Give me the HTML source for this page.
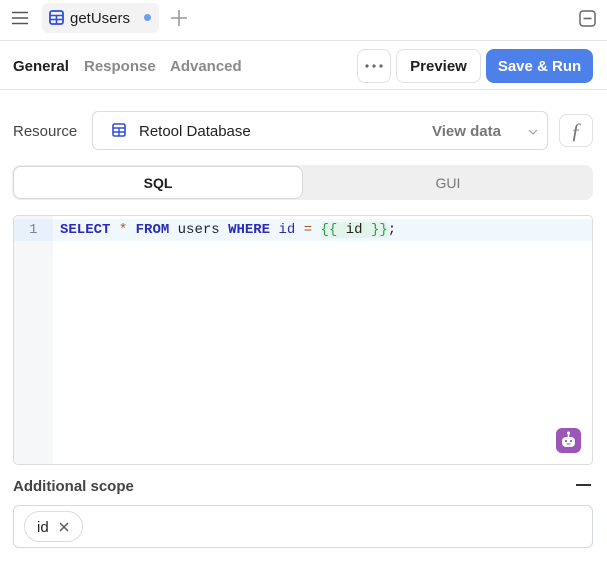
<!DOCTYPE html>
<html><head><style>
*{box-sizing:border-box;margin:0;padding:0}
body{width:607px;height:562px;background:#fff;font-family:"Liberation Sans",sans-serif;position:relative;overflow:hidden;color:#1f1f1f}
.a{position:absolute}
.btn{position:absolute;border:1px solid #e0e0e0;border-radius:8px;background:#fff;display:flex;align-items:center;justify-content:center;font-weight:bold;font-size:15px}
.mono{font-family:"Liberation Mono",monospace;font-size:14px}
</style></head><body>
<svg class="a" style="left:12px;top:11px" width="17" height="14"><path d="M0 1.5H16M0 7H16M0 12.5H16" stroke="#555" stroke-width="1.6"/></svg>
<div class="a" style="left:42px;top:3px;width:117px;height:30px;background:#f3f3f3;border-radius:6px"></div>
<svg class="a" style="left:49px;top:10px" width="15" height="15"><rect x="1" y="1" width="13" height="13" rx="2" fill="none" stroke="#2f4fd8" stroke-width="1.8"/><path d="M1 5.5H14M1 9.5H14M7.5 5.5V14" stroke="#2f4fd8" stroke-width="1.6"/></svg>
<div class="a" style="left:70px;top:10px;font-size:15px;color:#1f1f1f">getUsers</div>
<div class="a" style="left:144px;top:14px;width:7px;height:7px;border-radius:50%;background:#6d9ef0"></div>
<svg class="a" style="left:171px;top:10px" width="16" height="16"><path d="M8 0V16M0 8H16" stroke="#999" stroke-width="1.6"/></svg>
<svg class="a" style="left:579px;top:10px" width="17" height="17"><rect x="1" y="1" width="15" height="15" rx="3" fill="none" stroke="#666" stroke-width="1.5"/><path d="M4.5 8.5H12.5" stroke="#666" stroke-width="1.6"/></svg>
<div class="a" style="left:0;top:40px;width:607px;height:1px;background:#e6e6e6"></div>
<div class="a" style="left:13px;top:58px;font-size:15px;font-weight:bold;color:#1f1f1f">General</div>
<div class="a" style="left:84px;top:58px;font-size:15px;font-weight:bold;color:#8a8a8a">Response</div>
<div class="a" style="left:170px;top:58px;font-size:15px;font-weight:bold;color:#8a8a8a">Advanced</div>
<div class="btn" style="left:357px;top:49px;width:34px;height:34px"><svg width="18" height="4"><circle cx="2" cy="2" r="1.6" fill="#666"/><circle cx="9" cy="2" r="1.6" fill="#666"/><circle cx="16" cy="2" r="1.6" fill="#666"/></svg></div>
<div class="btn" style="left:396px;top:49px;width:85px;height:34px;color:#1f1f1f">Preview</div>
<div class="btn" style="left:486px;top:49px;width:107px;height:34px;background:#4e80ea;border-color:#4e80ea;color:#fff">Save &amp; Run</div>
<div class="a" style="left:0;top:89px;width:607px;height:1px;background:#e6e6e6"></div>
<div class="a" style="left:13px;top:123px;font-size:15px;color:#444">Resource</div>
<div class="a" style="left:92px;top:111px;width:456px;height:39px;border:1px solid #dcdcdc;border-radius:6px"></div>
<svg class="a" style="left:112px;top:123px" width="14" height="14"><rect x="1" y="1" width="12" height="12" rx="1.5" fill="none" stroke="#2f4fd8" stroke-width="1.6"/><path d="M1 5H13M1 9H13M7 5V13" stroke="#2f4fd8" stroke-width="1.4"/></svg>
<div class="a" style="left:139px;top:123px;font-size:15px;color:#1f1f1f">Retool Database</div>
<div class="a" style="left:432px;top:123px;font-size:15px;font-weight:bold;color:#777">View data</div>
<svg class="a" style="left:528px;top:129px" width="10" height="6"><path d="M1 1L5 5L9 1" fill="none" stroke="#aaa" stroke-width="1.3"/></svg>
<div class="btn" style="left:559px;top:114px;width:34px;height:33px;font-weight:normal"><span style="font-family:'Liberation Serif',serif;font-style:italic;font-size:22px;color:#777">ƒ</span></div>
<div class="a" style="left:12px;top:165px;width:581px;height:35px;background:#efefef;border-radius:8px"></div>
<div class="a" style="left:13px;top:166px;width:290px;height:33px;background:#fff;border:1px solid #d8d8d8;border-radius:8px;display:flex;align-items:center;justify-content:center;font-size:14px;font-weight:bold">SQL</div>
<div class="a" style="left:303px;top:166px;width:290px;height:33px;display:flex;align-items:center;justify-content:center;font-size:14px;color:#777">GUI</div>
<div class="a" style="left:13px;top:215px;width:580px;height:250px;border:1px solid #dcdcdc;border-radius:5px;overflow:hidden">
 <div class="a" style="left:0;top:0;width:39px;height:250px;background:#f6f7f8"></div>
 <div class="a" style="left:0;top:3px;width:39px;height:22px;background:#e8f0fb"></div>
 <div class="a" style="left:39px;top:3px;width:541px;height:22px;background:#f0f7fd"></div>
 <div class="a mono" style="left:15px;top:6px;color:#7a8592">1</div>
 <div class="a mono" style="left:46px;top:6px;white-space:pre;color:#222"><span style="color:#2b2bb5;font-weight:bold">SELECT</span> <span style="color:#b0561a">*</span> <span style="color:#2b2bb5;font-weight:bold">FROM</span> users <span style="color:#2b2bb5;font-weight:bold">WHERE</span> <span style="color:#2b2bb5">id</span> <span style="color:#b0561a">=</span> <span style="background:#e3f5ea;border-radius:3px"><span style="color:#2e9a58">{{</span> id <span style="color:#2e9a58">}}</span></span>;</div>
</div>
<div class="a" style="left:556px;top:428px;width:25px;height:25px;border-radius:6px;background:#9b56b8"></div>
<svg class="a" style="left:556px;top:428px" width="25" height="25"><rect x="6" y="9" width="13" height="10" rx="4" fill="#fff"/><path d="M12.5 5V9" stroke="#fff" stroke-width="1.5"/><circle cx="12.5" cy="5" r="1.5" fill="#fff"/><circle cx="10" cy="13" r="1.1" fill="#9b56b8"/><circle cx="15" cy="13" r="1.1" fill="#9b56b8"/><path d="M10.5 16H14.5" stroke="#9b56b8" stroke-width="1"/></svg>
<div class="a" style="left:13px;top:478px;font-size:15px;font-weight:bold;color:#444">Additional scope</div>
<div class="a" style="left:576px;top:484px;width:15px;height:2px;background:#333"></div>
<div class="a" style="left:13px;top:505px;width:580px;height:43px;border:1px solid #cfd8e3;border-radius:6px"></div>
<div class="a" style="left:24px;top:511px;width:59px;height:31px;border:1px solid #dcdcdc;border-radius:16px"></div>
<div class="a" style="left:37px;top:519px;font-size:15px;color:#222">id</div>
<svg class="a" style="left:59px;top:522px" width="10" height="10"><path d="M1 1L9 9M9 1L1 9" stroke="#555" stroke-width="1.4"/></svg>
</body></html>
